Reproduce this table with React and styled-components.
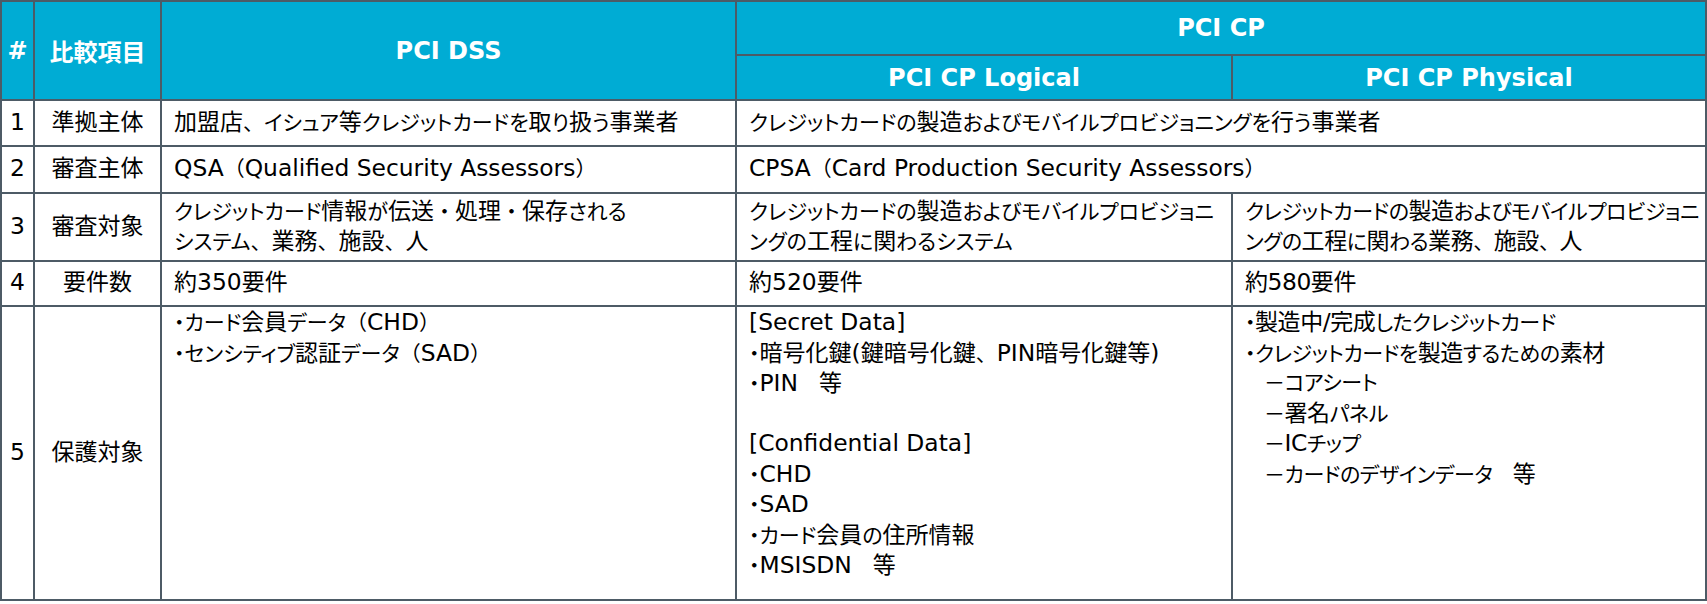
import React from "react";
import styled, { createGlobalStyle } from "styled-components";

const GlobalStyle = createGlobalStyle`
  html, body {
    margin: 0;
    padding: 0;
    background: #ffffff;
  }
  body {
    font-family: "DejaVu Sans", "Noto Sans CJK JP", sans-serif;
  }
`;

const LINE = "#4d5b66";
const HEAD_BG = "#00acd4";

const Table = styled.table`
  border-collapse: collapse;
  table-layout: fixed;
  width: 1705px;
  font-family: "DejaVu Sans", "Noto Sans CJK JP", sans-serif;
  font-feature-settings: "palt";
  font-size: 21px;
  color: #000;
`;

const HeadCell = styled.th`
  background: ${HEAD_BG};
  color: #ffffff;
  font-weight: 700;
  font-size: 24px;
  text-align: center;
  vertical-align: middle;
  border: 2px solid ${LINE};
  padding: 0;
  white-space: nowrap;
`;

const Row = styled.tr`
  height: ${(p) => p.$h}px;
`;

const Cell = styled.td`
  border: 2px solid ${LINE};
  padding: ${(p) => (p.$top ? "1px 4px 0 12px" : "0 4px 0 12px")};
  vertical-align: ${(p) => (p.$top ? "top" : "middle")};
  text-align: left;
  line-height: 29.5px;
  letter-spacing: ${(p) => (p.$tight ? "-0.45px" : "0")};
  white-space: nowrap;
  overflow: hidden;
`;

const LabelCell = styled(Cell)`
  padding: 0;
  text-align: center;
  vertical-align: middle;
`;

const Line = styled.div`
  padding-left: ${(p) => (p.$indent ? 19 : 0)}px;
  min-height: 29.5px;
`;

// the slide font sets latin and kanji a little larger than the narrow kana
const Latin = styled.span`
  font-size: 23.4px;
`;

const Kanji = styled.span`
  font-size: 23px;
`;

// punctuation that keeps its full width
const Wide = styled.span`
  font-feature-settings: normal;
`;

const TOKEN = /([\x20-\x7E]+|[（）、]|[\u4E00-\u9FFF々]+|・)/;

const renderText = (s) =>
  s.split(TOKEN).map((part, i) => {
    if (!part) return null;
    if (/^[\x20-\x7E]+$/.test(part)) return <Latin key={i}>{part}</Latin>;
    if (/^[（）、]$/.test(part)) return <Wide key={i}>{part}</Wide>;
    if (part === "・") return i <= 1 ? part : <Wide key={i}>{part}</Wide>;
    if (/^[\u4E00-\u9FFF々]+$/.test(part)) return <Kanji key={i}>{part}</Kanji>;
    return part;
  });

const Lines = ({ items }) => (
  <>
    {items.map((it, i) =>
      typeof it === "string" ? (
        <Line key={i}>{renderText(it)}</Line>
      ) : (
        <Line key={i} $indent>
          {renderText(it.text)}
        </Line>
      )
    )}
  </>
);

const rows = [
  {
    n: "1",
    label: "準拠主体",
    h: 46,
    dss: ["加盟店、イシュア等クレジットカードを取り扱う事業者"],
    cp: ["クレジットカードの製造およびモバイルプロビジョニングを行う事業者"],
  },
  {
    n: "2",
    label: "審査主体",
    h: 47,
    dss: ["QSA（Qualified Security Assessors）"],
    cp: ["CPSA（Card Production Security Assessors）"],
  },
  {
    n: "3",
    label: "審査対象",
    h: 68,
    dss: ["クレジットカード情報が伝送・処理・保存される", "システム、業務、施設、人"],
    logical: ["クレジットカードの製造およびモバイルプロビジョニ", "ングの工程に関わるシステム"],
    physical: ["クレジットカードの製造およびモバイルプロビジョニ", "ングの工程に関わる業務、施設、人"],
  },
  {
    n: "4",
    label: "要件数",
    h: 45,
    dss: ["約350要件"],
    logical: ["約520要件"],
    physical: ["約580要件"],
  },
  {
    n: "5",
    label: "保護対象",
    h: 294,
    top: true,
    dss: ["・カード会員データ（CHD）", "・センシティブ認証データ（SAD）"],
    logical: [
      "[Secret Data]",
      "・暗号化鍵(鍵暗号化鍵、PIN暗号化鍵等)",
      "・PIN　等",
      "",
      "[Confidential Data]",
      "・CHD",
      "・SAD",
      "・カード会員の住所情報",
      "・MSISDN　等",
    ],
    physical: [
      "・製造中/完成したクレジットカード",
      "・クレジットカードを製造するための素材",
      { text: "－コアシート" },
      { text: "－署名パネル" },
      { text: "－ICチップ" },
      { text: "－カードのデザインデータ　等" },
    ],
  },
];

export default function App() {
  return (
    <>
      <GlobalStyle />
      <Table>
        <colgroup>
          <col style={{ width: 33 }} />
          <col style={{ width: 127 }} />
          <col style={{ width: 575 }} />
          <col style={{ width: 496 }} />
          <col style={{ width: 474 }} />
        </colgroup>
        <thead>
          <Row $h={54}>
            <HeadCell rowSpan={2}>#</HeadCell>
            <HeadCell rowSpan={2}>比較項目</HeadCell>
            <HeadCell rowSpan={2}>PCI DSS</HeadCell>
            <HeadCell colSpan={2}>PCI CP</HeadCell>
          </Row>
          <Row $h={45}>
            <HeadCell>PCI CP Logical</HeadCell>
            <HeadCell>PCI CP Physical</HeadCell>
          </Row>
        </thead>
        <tbody>
          {rows.map((r) => (
            <Row key={r.n} $h={r.h}>
              <LabelCell>{renderText(r.n)}</LabelCell>
              <LabelCell>{renderText(r.label)}</LabelCell>
              <Cell $top={r.top}>
                <Lines items={r.dss} />
              </Cell>
              {r.cp ? (
                <Cell colSpan={2} $top={r.top}>
                  <Lines items={r.cp} />
                </Cell>
              ) : (
                <>
                  <Cell $top={r.top}>
                    <Lines items={r.logical} />
                  </Cell>
                  <Cell $top={r.top} $tight>
                    <Lines items={r.physical} />
                  </Cell>
                </>
              )}
            </Row>
          ))}
        </tbody>
      </Table>
    </>
  );
}
